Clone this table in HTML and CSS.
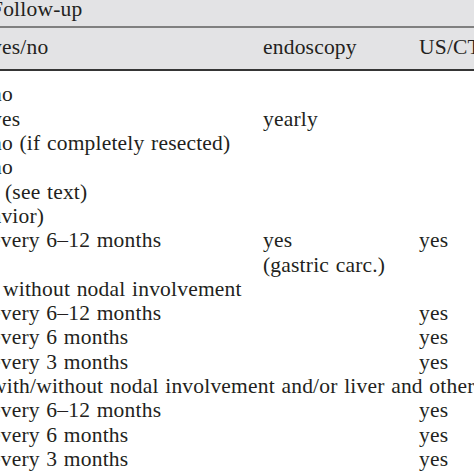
FILE: index.html
```html
<!DOCTYPE html>
<html>
<head>
<meta charset="utf-8">
<link rel="stylesheet" href="styles.css">
</head>
<body>
<div class="table">
  <div class="head">
    <div class="head-top">Follow-up</div>
    <div class="row head-cols">
      <div>yes/no</div>
      <div>endoscopy</div>
      <div>US/CT</div>
    </div>
  </div>
  <div class="body">
    <div class="row"><div>no</div><div></div><div></div></div>
    <div class="row"><div>yes</div><div>yearly</div><div></div></div>
    <div class="row"><div>no (if completely resected)</div><div></div><div></div></div>
    <div class="row"><div>no</div><div></div><div></div></div>
    <div class="row"><div class="indent-see">(see text)</div><div></div><div></div></div>
    <div class="row"><div class="cut-vior">behavior)</div><div></div><div></div></div>
    <div class="row"><div>every 6–12 months</div><div>yes</div><div>yes</div></div>
    <div class="row"><div></div><div>(gastric carc.)</div><div></div></div>
    <div class="span indent-without">without nodal involvement</div>
    <div class="row"><div>every 6–12 months</div><div></div><div>yes</div></div>
    <div class="row"><div>every 6 months</div><div></div><div>yes</div></div>
    <div class="row"><div>every 3 months</div><div></div><div>yes</div></div>
    <div class="span">with/without nodal involvement and/or liver and other</div>
    <div class="row"><div>every 6–12 months</div><div></div><div>yes</div></div>
    <div class="row"><div>every 6 months</div><div></div><div>yes</div></div>
    <div class="row"><div>every 3 months</div><div></div><div>yes</div></div>
  </div>
</div>
</body>
</html>
```
FILE: styles.css
```css
html, body {
  margin: 0;
  padding: 0;
  background: #ffffff;
  overflow: hidden;
}
.table {
  margin: -3px 0 0 -9px;
  width: 600px;
  font-family: "Liberation Serif", "Times New Roman", serif;
  font-size: 21.5px;
  letter-spacing: 0.2px;
  word-spacing: 1px;
  line-height: 24.3px;
  color: #231f20;
}
.head {
  background: #e3e3e5;
  border-bottom: 2px solid #353535;
}
.head-top {
  padding-bottom: 4.7px;
  border-bottom: 2px solid #808080;
  white-space: nowrap;
}
.head-cols {
  padding-top: 7.2px;
  padding-bottom: 9.5px;
}
.row {
  display: grid;
  grid-template-columns: 272px 156px 1fr;
  white-space: nowrap;
}
.body {
  padding-top: 11.5px;
}
.span {
  white-space: nowrap;
}
.indent-see {
  padding-left: 14px;
}
.cut-vior {
  text-indent: -31px;
}
.indent-without {
  padding-left: 12px;
}
```
